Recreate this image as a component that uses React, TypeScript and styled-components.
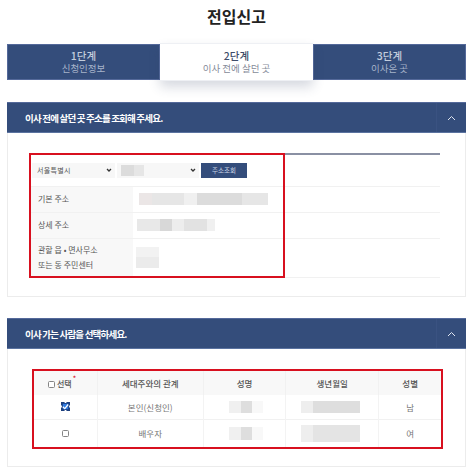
import React from 'react';
import styled, { createGlobalStyle } from 'styled-components';

const Global = createGlobalStyle`
  html, body { margin: 0; padding: 0; background: #fff; }
  body { font-family: "Noto Sans CJK KR", "Noto Sans", sans-serif; color: #333; }
  * { box-sizing: border-box; }
`;
const Page = styled.div`
  width: 474px; height: 472px; overflow: hidden; padding: 0 8px 0 7px;
  display: flex; flex-direction: column;
`;
const Title = styled.h1`
  margin: 0; height: 44px; padding-top: 4px; text-align: center;
  font-size: 16px; line-height: 24px; font-weight: 700; color: #222;
`;
const Steps = styled.div`display: grid; grid-template-columns: repeat(3, 153px); height: 36px; margin-bottom: 22px;`;
const Step = styled.div<{ $on?: boolean }>`
  display: flex; flex-direction: column; align-items: center; justify-content: center;
  background: ${p => (p.$on ? '#fff' : '#344d7b')};
  border: 1px solid ${p => (p.$on ? '#eef0f4' : '#54699a')};
  position: relative;
  ${p => p.$on && 'margin: -1px 0; border-width: 1px 0; box-shadow: 0 6px 12px rgba(50,65,100,0.2); z-index: 1;'}
`;
const StepNo = styled.div<{ $on?: boolean }>`
  font-size: 10.5px; line-height: 12.5px; font-weight: 500;
  color: ${p => (p.$on ? '#3d4b69' : '#c3cddd')};
`;
const StepName = styled.div<{ $on?: boolean }>`
  font-size: 9.5px; line-height: 12.5px;
  color: ${p => (p.$on ? '#858b99' : '#a6b3ca')};
`;
const Panel = styled.section<{ $h: number; $mb: number }>`
  height: ${p => p.$h}px; margin-bottom: ${p => p.$mb}px;
  border: 1px solid #ececec; border-top: 0; display: flex; flex-direction: column;
`;
const PanelHead = styled.header`
  height: 31px; margin: 0 -1px; flex: none; background: #344d7b;
  display: flex; align-items: center; justify-content: space-between; padding-left: 18px;
  border-bottom: 1px solid #5b73a0; border-top: 1px solid #54699a;
`;
const PanelTitle = styled.h2`
  margin: 0; color: #fff; font-size: 9.5px; line-height: 14px; font-weight: 700; letter-spacing: -0.8px;
`;
const Toggle = styled.div`
  width: 30px; height: 100%; border-left: 1px solid #3a5281; display: flex; align-items: center; justify-content: center;
`;
const Chevron = () => (
  <svg width="9" height="6" viewBox="0 0 9 6" fill="none" stroke="#dfe5ef" strokeWidth="1">
    <path d="M1 5 L4.5 1.5 L8 5" />
  </svg>
);
const AddressWrap = styled.div`position: relative; margin: 20px 25px 0 22px; border-top: 2px solid #8a90a3;`;
const Highlight = styled.div`
  position: absolute; left: -1px; top: -2px; width: 256px; height: 125px;
  border: 2.5px solid #d8101f; pointer-events: none;
`;
const Table = styled.table`
  width: 100%; border-collapse: collapse; table-layout: fixed;
`;
const LabelCol = styled.col`width: 103px;`;
const Row = styled.tr<{ $h: number }>`height: ${p => p.$h}px; border-bottom: 1px solid #f1f1f1;`;
const LabelCell = styled.th`
  padding: 0 0 0 8px; background: #f8f8f8; text-align: left; vertical-align: middle;
  font-size: 8px; line-height: 14.5px; font-weight: 400; color: #555;
`;
const ValueCell = styled.td`padding: 0 0 0 5px; vertical-align: middle;`;
const SearchCell = styled.td`padding: 0 0 0 2px; vertical-align: middle;`;
const SearchRow = styled.div`display: flex; align-items: center; gap: 2px;`;
const SelectWrap = styled.div`position: relative; display: flex;`;
const arrow = `url("data:image/svg+xml,%3Csvg xmlns='http://www.w3.org/2000/svg' width='6' height='4'%3E%3Cpath d='M1 1l2 2 2-2' fill='none' stroke='%23333' stroke-width='1.3'/%3E%3C/svg%3E")`;
const Select = styled.select<{ $w: number }>`
  appearance: none; width: ${p => p.$w}px; height: 15px; border: 0; border-radius: 0;
  background: #f7f7f7 ${arrow} no-repeat right 3px center; padding: 0 0 0 5px; margin: 0;
  font-family: inherit; font-size: 7px; color: #555; letter-spacing: 0.3px;
`;
const SelectMask = styled.div`
  position: absolute; left: 4px; top: 2px; width: 23px; height: 11px;
  background: linear-gradient(90deg,#dcdcdc 0 55%,#e6e6e6 55%); filter: blur(0.6px);
`;
const SearchButton = styled.button`
  width: 46px; height: 15px; padding: 0; border: 0; background: #344d7b; color: #c9d3e3;
  font-family: inherit; font-size: 6.5px; line-height: 13px;
`;
const Blur = styled.div<{ $w: number; $h: number; $x?: number; $tone?: string }>`
  width: ${p => p.$w}px; height: ${p => p.$h}px; margin-left: ${p => p.$x ?? 0}px;
  background: ${p => p.$tone ?? '#e6e6e6'};
  filter: blur(0.6px);
`;
const PersonWrap = styled.div`
  margin: 20px 22px 0 24px; border: 2.5px solid #d8101f;
`;
const PeopleTable = styled.table`width: 100%; border-collapse: collapse; table-layout: fixed;`;
const HeadCell = styled.th<{ $w: number }>`
  width: ${p => p.$w}px; height: 24px; padding: 0; background: #f8f8f8; border-left: 1px solid #f1f1f1;
  font-size: 8.5px; font-weight: 500; color: #555; text-align: center; vertical-align: middle;
  &:first-child { border-left: 0; padding-right: 11px; font-size: 8px; }
`;
const BodyRow = styled.tr<{ $h: number }>`height: ${p => p.$h}px; border-bottom: 1px solid #f1f1f1; &:last-child { border-bottom: 0; }`;
const BodyCell = styled.td`
  padding: 0; border-left: 1px solid #f3f3f3; font-size: 8.5px; color: #777; text-align: center; vertical-align: middle;
  &:first-child { border-left: 0; }
`;
const CellInner = styled.div`display: flex; justify-content: center; align-items: center;`;
const Box = styled.span`
  display: inline-block; width: 7px; height: 7px; border: 1px solid #858585; border-radius: 1.5px; background: #fff;
  vertical-align: -1px; margin-right: 2px;
`;
const PlainBox = styled(Box)`margin: 0;`;
const Required = styled.span`
  position: absolute; margin: -3px 0 0 1px; color: #d8101f; font-size: 7px; line-height: 7px;
`;
const CheckedBox = () => (
  <svg width="9" height="9" viewBox="0 0 10 10" style={{ display: 'block' }}>
    <rect width="10" height="10" fill="#1c3f7f" />
    <rect x="2" y="2" width="6" height="6" fill="#2f7ae0" />
    <path d="M2 5.2 L4.2 7.4 L8 2.8" stroke="#fff" strokeWidth="1.4" fill="none" />
    <path d="M4 0 H6 V1 H4Z M0 4 H1 V6 H0Z M9 4 H10 V6 H9Z M4 9 H6 V10 H4Z" fill="#fff" />
  </svg>
);
const nameTone = 'linear-gradient(90deg,#f0f0f0 0 35%,#dedede 35% 68%,#f8f8f8 68%)';

export default function App() {
  return (
    <Page>
      <Global />
      <Title>전입신고</Title>
      <Steps>
        <Step><StepNo>1단계</StepNo><StepName>신청인정보</StepName></Step>
        <Step $on><StepNo $on>2단계</StepNo><StepName $on>이사 전에 살던 곳</StepName></Step>
        <Step><StepNo>3단계</StepNo><StepName>이사온 곳</StepName></Step>
      </Steps>
      <Panel $h={195} $mb={21}>
        <PanelHead>
          <PanelTitle>이사 전에 살던 곳 주소를 조회해 주세요.</PanelTitle>
          <Toggle><Chevron /></Toggle>
        </PanelHead>
        <AddressWrap>
          <Highlight />
          <Table>
            <colgroup><LabelCol /><col /></colgroup>
            <tbody>
              <Row $h={31}>
                <SearchCell colSpan={2}>
                  <SearchRow>
                    <Select $w={83} defaultValue="seoul"><option value="seoul">서울특별시</option></Select>
                    <SelectWrap>
                      <Select $w={82} aria-label="시군구"><option value=""></option></Select>
                      <SelectMask />
                    </SelectWrap>
                    <SearchButton>주소조회</SearchButton>
                  </SearchRow>
                </SearchCell>
              </Row>
              <Row $h={26}>
                <LabelCell>기본 주소</LabelCell>
                <ValueCell><Blur $w={129} $h={12} $x={1} $tone="linear-gradient(90deg,#ebe6e6 0 10%,#e6e6e6 10% 35%,#f0f0f0 35% 45%,#dcdcdc 45% 80%,#e6e6e6 80%)" /></ValueCell>
              </Row>
              <Row $h={26}>
                <LabelCell>상세 주소</LabelCell>
                <ValueCell><Blur $w={78} $h={12} $x={-1} $tone="linear-gradient(90deg,#e8e8e8 0 30%,#d8d8d8 30% 45%,#ededed 45% 60%,#e2e2e2 60% 90%,#f0f0f0 90%)" /></ValueCell>
              </Row>
              <Row $h={39}>
                <LabelCell>관할 읍 • 면사무소<br />또는 동 주민센터</LabelCell>
                <ValueCell><Blur $w={23} $h={21} $x={-2} $tone="linear-gradient(180deg,#f2f2f2 0 50%,#ebebeb 50%)" /></ValueCell>
              </Row>
            </tbody>
          </Table>
        </AddressWrap>
      </Panel>
      <Panel $h={149} $mb={0}>
        <PanelHead>
          <PanelTitle>이사 가는 사람을 선택하세요.</PanelTitle>
          <Toggle><Chevron /></Toggle>
        </PanelHead>
        <PersonWrap>
          <PeopleTable>
            <thead>
              <tr>
                <HeadCell $w={63}><Box />선택<Required>*</Required></HeadCell>
                <HeadCell $w={106}>세대주와의 관계</HeadCell>
                <HeadCell $w={82}>성명</HeadCell>
                <HeadCell $w={93}>생년월일</HeadCell>
                <HeadCell $w={62}>성별</HeadCell>
              </tr>
            </thead>
            <tbody>
              <BodyRow $h={24}>
                <BodyCell><CellInner><CheckedBox /></CellInner></BodyCell>
                <BodyCell>본인(신청인)</BodyCell>
                <BodyCell><CellInner><Blur $w={34} $h={12} $x={4} $tone={nameTone} /></CellInner></BodyCell>
                <BodyCell><CellInner><Blur $w={59} $h={12} $x={-4} $tone="linear-gradient(90deg,#eeeeee 0 20%,#dedede 20% 100%)" /></CellInner></BodyCell>
                <BodyCell>남</BodyCell>
              </BodyRow>
              <BodyRow $h={28}>
                <BodyCell><CellInner><PlainBox /></CellInner></BodyCell>
                <BodyCell>배우자</BodyCell>
                <BodyCell><CellInner><Blur $w={34} $h={13} $x={4} $tone={nameTone} /></CellInner></BodyCell>
                <BodyCell><CellInner><Blur $w={59} $h={17} $x={-4} $tone="linear-gradient(90deg,#eeeeee 0 20%,#e4e4e4 20% 100%)" /></CellInner></BodyCell>
                <BodyCell>여</BodyCell>
              </BodyRow>
            </tbody>
          </PeopleTable>
        </PersonWrap>
      </Panel>
    </Page>
  );
}
